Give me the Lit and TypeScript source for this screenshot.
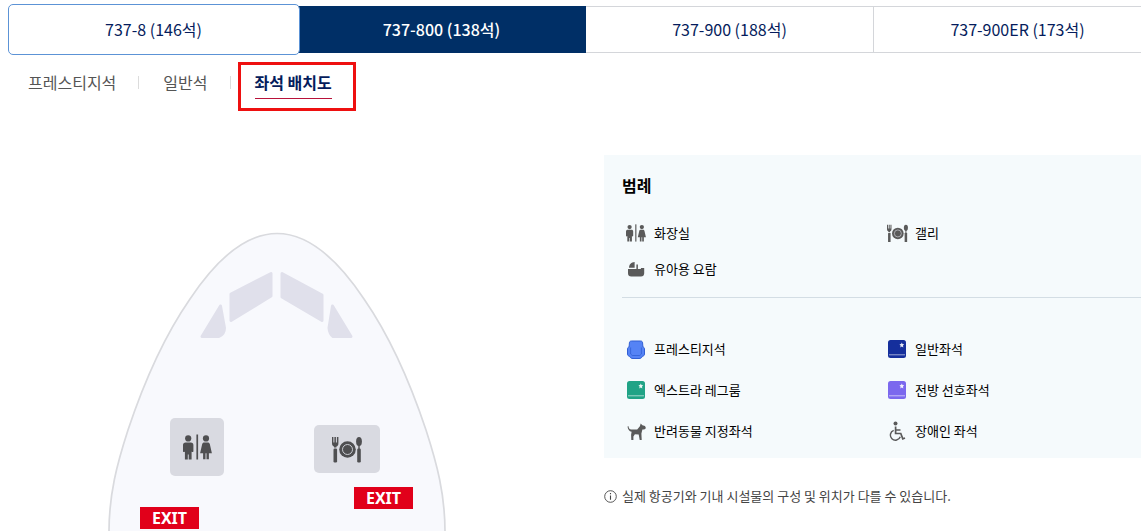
import { LitElement, html, css, svg } from "lit";
import { customElement, property, state } from "lit/decorators.js";

const drawings: Record<string, unknown> = {
  toilet: svg`<g fill="currentColor">
    <circle cx="5.2" cy="4.4" r="3.1"/>
    <path d="M2.6 8.4h5.2c1.800 0 2.600 1 2.600 2.600v6.200c0 1-1.400 1.200-1.800.2v8H5.700v-5h-.9v5H1.900v-8C1.400 18.400 0 18.200 0 17.200V11c0-1.600 1-2.600 2.600-2.600z"/>
    <rect x="13.400" y="0.500" width="1.700" height="25"/>
    <circle cx="23" cy="4.400" r="3.100"/>
    <path d="M21.300 8.400h3.400c1.200 0 1.800.6 2.100 1.700l2.100 9.200h-3v6h-2.400v-6h-1v6h-2.400v-6h-3l2.100-9.200c.3-1.100.9-1.700 2.100-1.700z"/></g>`,
  galley: svg`<g fill="currentColor">
    <path d="M0 1h1.400v5.500h1V1h1.500v5.500h1V1h1.500v6.200c0 2.200-1 3-2 3.400v1H2v-1C1 10.200 0 9.400 0 7.200z"/>
    <rect x="1.500" y="12.500" width="3.600" height="14" rx="1.200"/>
    <circle cx="15.500" cy="13.500" r="8.300"/>
    <circle cx="15.500" cy="13.500" r="5" fill="none" stroke="#d7d9e0" stroke-width=".9"/>
    <ellipse cx="27" cy="5.500" rx="2.900" ry="4.500"/>
    <rect x="26.300" y="9" width="1.400" height="4"/>
    <rect x="25.200" y="12.500" width="3.600" height="14" rx="1.200"/></g>`,
  cradle: svg`<g fill="currentColor"><path d="M2 6.800C2 3.300 4.300 1.200 7.600 1v5.800z"/>
    <path d="M1 8h8.400V3.400h1.500V8h3V7h3.300v5.200c0 2-1.200 3.300-3.200 3.300H4.300C2.200 15.500 1 14.300 1 12.200z"/></g>`,
  prestige: svg`<path d="M4.500 1h9c1.500 0 2 .8 2.100 2l.3 4c1.100.2 1.600 1 1.600 2v5c0 1.400-.8 2-2 2.200-.8 1.800-2 2.300-3.500 2.300H6c-1.500 0-2.700-.5-3.500-2.300-1.200-.2-2-.8-2-2.200V9c0-1 .5-1.800 1.600-2l.3-4c.1-1.200.6-2 2.100-2z" fill="#5583f5" stroke="#315fd4"/>
    <path d="M3.600 7.500v6.500l1.600 1.500h7.600l1.600-1.500V7.500" fill="none" stroke="#315fd4" stroke-width=".8"/>`,
  dog: svg`<path d="M1.600 3.200c0 1.800.8 3.100 2.600 3.300h6l2.700-3.300.8-2.800 1.700 1.900 2.600.7.800 1.700c-.3 1.400-1.300 1.900-3.400 1.900l-1 4 .3 6.300h-2l-1-5.300-3.800-.3-1.500 2.200v3.400H4.300l-.2-5.200.5-3C2.200 8.300.9 6.300.5 3.400z" fill="currentColor"/>`,
  wheelchair: svg`<g fill="none" stroke="currentColor"><circle cx="6.500" cy="2.500" r="2" fill="currentColor" stroke="none"/>
    <path d="M6.600 5.500v7h5.200l2 5.300 2.200-.8M7 9h4.500" stroke-width="1.700"/>
    <path d="M4.700 9.300a5.100 5.100 0 1 0 6.600 6.500" stroke-width="1.400"/></g>`,
  info: svg`<circle cx="6.500" cy="6.500" r="5.800" fill="none" stroke="currentColor" stroke-width=".9"/><path d="M6.500 5.600v4.200M6.500 3v1.300" stroke="currentColor" stroke-width="1.100"/>`,
};

const seat = (fill: string) => svg`<rect width="18" height="18" rx="2.500" fill="${fill}"/>
  <path d="M1 14.800h16" stroke="#fff" stroke-opacity=".65" stroke-width=".9"/>
  <path d="M13.800 2.600l.7 1.500 1.700.2-1.200 1.300.3 1.800-1.500-.9-1.500.9.3-1.800-1.200-1.300 1.700-.2z" fill="#fff" fill-opacity=".9"/>`;
drawings.economy = seat("#152f9c");
drawings.legroom = seat("#20a386");
drawings.front = seat("#7b68ee");

const boxes: Record<string, [number, number]> = {
  toilet: [29, 26], galley: [30, 27], cradle: [18, 16], prestige: [18, 19],
  dog: [19, 17], wheelchair: [17, 20], info: [13, 13],
};

@customElement("seat-icon")
class SeatIcon extends LitElement {
  @property() name = "";
  @property({ type: Number }) width = 18;
  static styles = css`
    :host { display: inline-flex; }
    svg { display: block; }
  `;
  render() {
    const [w, h] = boxes[this.name] ?? [18, 18];
    return html`<svg aria-hidden="true" width=${this.width} height=${(this.width * h) / w} viewBox="0 0 ${w} ${h}">${drawings[this.name]}</svg>`;
  }
}

@customElement("app-root")
class AppRoot extends LitElement {
  @state() private model = 1;

  static styles = css`
    :host { display: block; overflow: hidden; background: #fff; color: #000;
      font-family: "Noto Sans CJK KR", "Noto Sans", sans-serif; font-size: 13px; line-height: 24px; }
    .page { margin: 6px -21px 0 10px; }
    .models { display: grid; grid-template-columns: repeat(4, 1fr); }
    .model { box-sizing: border-box; height: 47px; padding: 0 0 2px; border: 1px solid #d4d6da; border-left-width: 0;
      background: #fff; color: #051c5c; font: inherit; font-size: 16px; cursor: pointer; }
    .model.selected { background: #002f66; border-color: #002f66; color: #fff; font-weight: 500; }
    .model.ringed { position: relative; border-color: transparent; border-radius: 3px; outline: 1px solid #5c93d6; outline-offset: 1px; box-shadow: 0 0 0 1px #fff; }
    .sections { display: flex; padding: 17px 0 0 18px; font-size: 16px; }
    .section { position: relative; color: #555; text-decoration: none; padding-bottom: 4px; }
    .section + .section::before { content: ""; display: inline-block; width: 1px; height: 13px; margin: 0 24px 0 22px; background: #dcdcdc; }
    .section.current { color: #051c5c; font-weight: 700; }
    .current .label { display: inline-block; padding-bottom: 4px; border-bottom: 1px solid #b8123a; }
    .marker { position: absolute; inset: -8px -24px -8px 30px; border: 3px solid #ee1010; pointer-events: none; }
    .content { display: grid; grid-template-columns: minmax(0, 534fr) minmax(0, 558fr); column-gap: 60px; align-items: start; padding-top: 52px; }
    .plane { position: relative; width: 340px; height: 299px; margin: 77px auto 0; overflow: hidden; }
    .hull { display: block; }
    .facility { position: absolute; display: flex; align-items: center; justify-content: center; border-radius: 5px; background: #d9dae1; color: #4f4f51; }
    .lavatory { left: 63px; top: 186px; width: 54px; height: 58px; }
    .kitchen { left: 207px; top: 193px; width: 66px; height: 48px; }
    .exit { position: absolute; width: 59px; height: 22px; line-height: 22px; text-align: center; background: #e1001a; color: #fff; font-family: "Noto Sans", sans-serif; font-size: 16px; font-weight: 700; }
    .exit.left { left: 33px; top: 275px; }
    .exit.right { left: 247px; top: 255px; }
    .legend { padding: 18px 18px 15px; background: #f5fafc; }
    .title { margin: 0 0 24px; font-size: 16px; line-height: 24px; font-weight: 700; }
    .items { display: grid; grid-template-columns: 1fr 1fr; row-gap: 12px; margin: 0; padding: 0; list-style: none; }
    .items.seats { margin-top: 16px; padding-top: 39px; row-gap: 17px; border-top: 1px solid #d3dde4; }
    .item { display: flex; align-items: center; gap: 4px; }
    .symbol { display: flex; justify-content: center; width: 28px; color: #5a5a5a; }
    .note { display: flex; align-items: center; gap: 5px; margin: 26px 0 0; color: #444; }
  `;

  private item(icon: string, width: number, text: string) {
    return html`<li class="item"><span class="symbol"><seat-icon name=${icon} width=${width}></seat-icon></span>${text}</li>`;
  }

  render() {
    const models = ["737-8 (146석)", "737-800 (138석)", "737-900 (188석)", "737-900ER (173석)"];
    return html`<main class="page">
      <div class="models">
        ${models.map((m, i) => html`<button type="button" class="model ${i === this.model ? "selected" : ""} ${i === 0 ? "ringed" : ""}"
          aria-pressed=${i === this.model} @click=${() => (this.model = i)}>${m}</button>`)}
      </div>
      <nav class="sections">
        <a class="section" href="#prestige">프레스티지석</a>
        <a class="section" href="#economy">일반석</a>
        <a class="section current" href="#seatmap"><span class="label">좌석 배치도</span><span class="marker"></span></a>
      </nav>
      <div class="content">
        <div class="plane">
          <svg class="hull" width="340" height="299" viewBox="0 0 340 299" aria-hidden="true">
            <path d="M2 300C2 262 10 232 21 198C37 150 56 106 83 67C109 28 138 1.500 170 1.500S231 28 257 67C284 106 303 150 319 198C330 232 338 262 338 300" fill="#f8f9fd" stroke="#d9dade" stroke-width="1.700"/>
            <g fill="#e0e0eb" stroke="#e0e0eb" stroke-width="3" stroke-linejoin="round">
              <path d="M124 62L164 41.500V64L124 88.500z"/><path d="M175 41.500L215 63V88.500L175 65z"/>
              <path d="M113.500 74L95 104.500H112Q117.500 102 117.500 96z"/><path d="M225.500 74L244 104.500H226Q222.500 102 222 96z"/>
            </g>
          </svg>
          <div class="facility lavatory"><seat-icon name="toilet" width="29"></seat-icon></div>
          <div class="facility kitchen"><seat-icon name="galley" width="30"></seat-icon></div>
          <span class="exit right">EXIT</span>
          <span class="exit left">EXIT</span>
        </div>
        <div>
          <section class="legend">
            <h2 class="title">범례</h2>
            <ul class="items">
              ${this.item("toilet", 20, "화장실")}${this.item("galley", 21, "갤리")}${this.item("cradle", 18, "유아용 요람")}
            </ul>
            <ul class="items seats">
              ${this.item("prestige", 18, "프레스티지석")}${this.item("economy", 18, "일반좌석")}
              ${this.item("legroom", 18, "엑스트라 레그룸")}${this.item("front", 18, "전방 선호좌석")}
              ${this.item("dog", 19, "반려동물 지정좌석")}${this.item("wheelchair", 17, "장애인 좌석")}
            </ul>
          </section>
          <p class="note"><seat-icon name="info" width="13"></seat-icon>실제 항공기와 기내 시설물의 구성 및 위치가 다를 수 있습니다.</p>
        </div>
      </div>
    </main>`;
  }
}
